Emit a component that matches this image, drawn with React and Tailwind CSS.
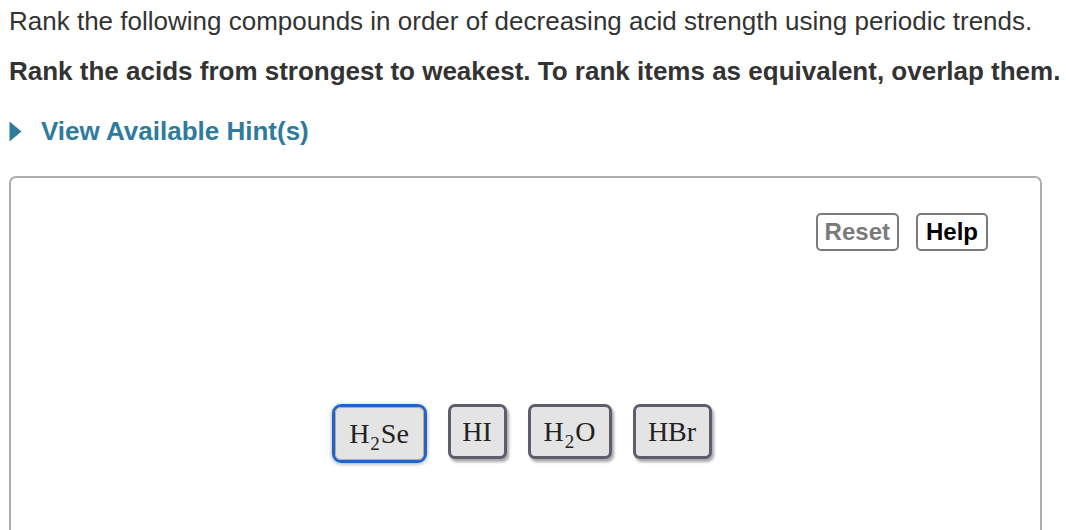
export default function App() {
  const tile =
    "flex items-center justify-center h-[55px] rounded-[7px] border-[3px] border-[#5d5d6b] bg-[#e4e4e4] shadow-[2px_3px_3px_rgba(0,0,0,0.35)] text-[28px] text-[#222]";
  const serif = { fontFamily: '"Liberation Serif", "Times New Roman", serif' };
  const Sub = () => <span className="relative top-[7px] text-[19px] leading-none mx-[1px]">2</span>;
  return (
    <div className="h-[530px] overflow-hidden bg-white pl-[9px] pr-[8px] pt-[5px]" style={{ fontFamily: '"Liberation Sans", Arial, sans-serif' }}>
      <p className="text-[26px] leading-[32px] text-[#333] whitespace-nowrap">
        Rank the following compounds in order of decreasing acid strength using periodic trends.
      </p>
      <p className="mt-[18px] text-[26px] leading-[32px] font-bold text-[#333] whitespace-nowrap">
        Rank the acids from strongest to weakest. To rank items as equivalent, overlap them.
      </p>
      <div className="mt-[28px] flex items-center h-[32px]">
        <svg width="13" height="21" viewBox="0 0 13 21" className="mr-[19px]">
          <path d="M0.5 0.5 L12.5 10.5 L0.5 20.5 Z" fill="#2f7b9d" />
        </svg>
        <span className="text-[26px] font-bold text-[#2f7b9d]">View Available Hint(s)</span>
      </div>
      <div className="mt-[29px] w-[1033px] h-[400px] border-2 border-[#adadad] rounded-[7px] pt-[35px]">
        <div className="flex justify-end gap-[17px] pr-[52px]">
          <button className="h-[38px] px-[7px] rounded-[5px] border-2 border-[#7b7b7b] bg-white text-[24px] leading-none font-bold text-[#7a7a7a]">
            Reset
          </button>
          <button className="h-[38px] px-[8px] rounded-[5px] border-2 border-[#7b7b7b] bg-white text-[24px] leading-none font-bold text-black">
            Help
          </button>
        </div>
        <div className="mt-[153px] flex justify-center gap-[21px] pr-[8px]" style={serif}>
          <div className="rounded-[9px] border-[3px] border-[#1f63d0] shadow-[0_1px_4px_rgba(0,0,0,0.35)]">
            <div className="flex items-center justify-center h-[53px] w-[89px] rounded-[6px] border border-[#c7a77c] bg-[#e4e4e4] text-[28px] text-[#222]">
              <span>H<Sub />Se</span>
            </div>
          </div>
          <div className={tile + " w-[59px]"}>HI</div>
          <div className={tile + " w-[84px]"}>
            <span>H<Sub />O</span>
          </div>
          <div className={tile + " w-[79px]"}>HBr</div>
        </div>
      </div>
    </div>
  );
}
